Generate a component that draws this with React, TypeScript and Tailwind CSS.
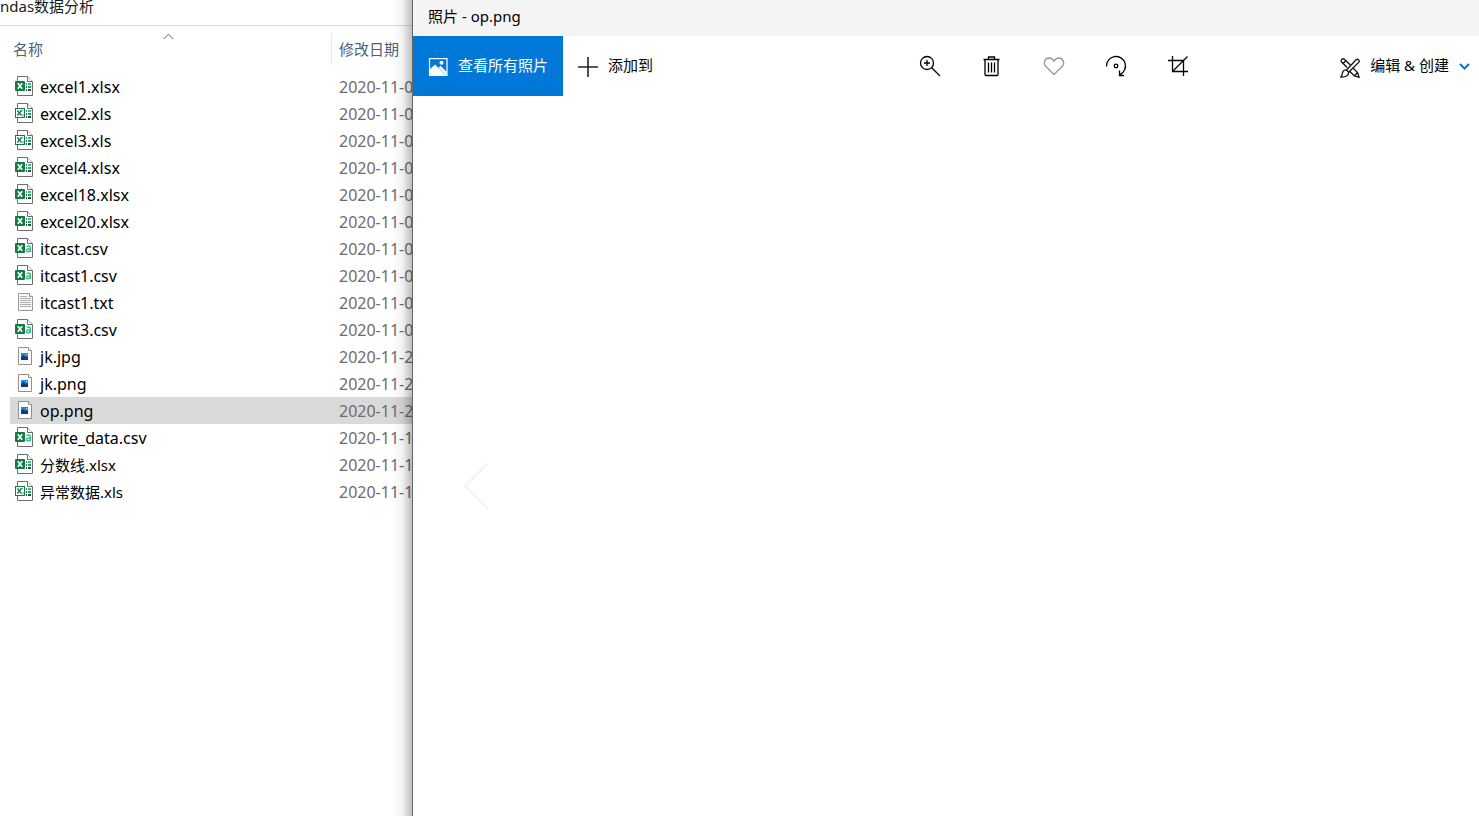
import React from 'react';

type Kind = 'xlsx' | 'xls' | 'csv' | 'txt' | 'image';

interface FileEntry {
  name: string;
  kind: Kind;
  date: string;
}

const files: FileEntry[] = [
  { name: 'excel1.xlsx', kind: 'xlsx', date: '2020-11-0' },
  { name: 'excel2.xls', kind: 'xls', date: '2020-11-0' },
  { name: 'excel3.xls', kind: 'xls', date: '2020-11-0' },
  { name: 'excel4.xlsx', kind: 'xlsx', date: '2020-11-0' },
  { name: 'excel18.xlsx', kind: 'xlsx', date: '2020-11-0' },
  { name: 'excel20.xlsx', kind: 'xlsx', date: '2020-11-0' },
  { name: 'itcast.csv', kind: 'csv', date: '2020-11-0' },
  { name: 'itcast1.csv', kind: 'csv', date: '2020-11-0' },
  { name: 'itcast1.txt', kind: 'txt', date: '2020-11-0' },
  { name: 'itcast3.csv', kind: 'csv', date: '2020-11-0' },
  { name: 'jk.jpg', kind: 'image', date: '2020-11-2' },
  { name: 'jk.png', kind: 'image', date: '2020-11-2' },
  { name: 'op.png', kind: 'image', date: '2020-11-2' },
  { name: 'write_data.csv', kind: 'csv', date: '2020-11-1' },
  { name: '分数线.xlsx', kind: 'xlsx', date: '2020-11-1' },
  { name: '异常数据.xls', kind: 'xls', date: '2020-11-1' },
];

const selected = 'op.png';

const isLatin = (name: string) => /^[\w.]+$/.test(name);

function SheetCells() {
  return (
    <g>
      <rect x="11" y="7" width="1" height="2" fill="#21a366" />
      <rect x="13" y="7" width="3" height="2" fill="#33c481" />
      <rect x="11" y="10" width="1" height="2" fill="#107c41" />
      <rect x="13" y="10" width="3" height="2" fill="#21a366" />
      <rect x="11" y="13" width="1" height="2" fill="#185c37" />
      <rect x="13" y="13" width="3" height="2" fill="#185c37" />
    </g>
  );
}

function FileIcon({ kind }: { kind: Kind }) {
  if (kind === 'txt') {
    return (
      <svg className="size-5 shrink-0" viewBox="0 0 20 20" aria-hidden="true">
        <path d="M3.500 1.500h11l3 3v14h-14z" fill="#f8f8f8" stroke="#999" />
        <path d="M14.500 1.500v3h3" fill="#fff" stroke="#999" />
        <path d="M5 4.500h7M5 6.500h11M5 8.500h11M5 10.500h11M5 12.500h11M5 14.500h11" stroke="#b0b0b0" />
      </svg>
    );
  }
  if (kind === 'image') {
    return (
      <svg className="size-5 shrink-0" viewBox="0 0 20 20" aria-hidden="true">
        <path d="M3.500 1.500h10l3 3v14h-13z" fill="#fcfcfc" stroke="#909090" />
        <path d="M13.500 1.500v3h3" fill="#fff" stroke="#909090" />
        <rect x="6" y="7" width="7" height="7" fill="#1e88e5" />
        <path d="M6 14v-3l2-2 2.500 2 1-1 1.500 1.500v2.500z" fill="#0c3c7c" />
        <rect x="11" y="8" width="1" height="1" fill="#bfe3ff" />
      </svg>
    );
  }
  return (
    <svg className="size-5 shrink-0" viewBox="0 0 20 20" aria-hidden="true">
      <path d="M2.500 .5h10l5 5v14h-15z" fill="#fff" stroke="#6e6e6e" />
      <path d="M12.500 .5v5h5" fill="#fff" stroke="#6e6e6e" />
      {kind === 'csv' ? (
        <g fill="none" stroke="#33c481" strokeWidth="1.500">
          <path d="M11.700 8.600c1.300-.9 3.600-.8 3.600 1v4.500" />
          <path d="M15.300 10.800c-2.200 0-3.800.3-3.800 1.700 0 1.900 3 1.700 3.800-.2" />
        </g>
      ) : (
        <SheetCells />
      )}
      {kind === 'xls' ? (
        <g fill="none">
          <rect x=".5" y="5.500" width="9" height="9" fill="#fff" stroke="#107c41" />
          <path d="M2.300 7.500l4.200 5M6.500 7.500l-4.200 5" stroke="#107c41" strokeWidth="1.300" />
          <path d="M5 7.500h3M8 11v2.500" stroke="#4aa673" />
        </g>
      ) : (
        <g>
          <rect x="0" y="5" width="10" height="10" rx="1" fill="#107c41" />
          <path d="M2.800 7.200l4.400 5.600M7.200 7.200l-4.400 5.600" stroke="#fff" strokeWidth="1.700" />
        </g>
      )}
    </svg>
  );
}

function Explorer() {
  return (
    <section className="relative w-[412px] shrink-0 overflow-hidden" aria-label="ndas数据分析">
      <header className="flex h-[26px] items-start border-b border-[#d9d9d9]">
        <h1 className="-mt-1 text-[15px] leading-5 text-[#1a1a1a]">ndas数据分析</h1>
      </header>
      <table className="ml-[10px] w-[480px] table-fixed border-separate border-spacing-0 text-left">
        <thead>
          <tr className="h-[47px] text-[15px] leading-5 text-[#4c607a]">
            <th className="relative w-[322px] p-0 pb-[2px] pl-[3px] font-normal">
              名称
              <svg className="absolute top-[7px] left-[153px] h-[7px] w-[11px]" viewBox="0 0 11 7" fill="none" stroke="#666" aria-hidden="true">
                <path d="M.7 6l4.800-4.800L10.300 6" />
              </svg>
              <span className="absolute top-[7px] right-0 h-8 w-px bg-[#e5e5e5]" />
            </th>
            <th className="p-0 pb-[2px] pl-[7px] font-normal">修改日期</th>
          </tr>
        </thead>
        <tbody>
          {files.map((file) => (
            <tr
              key={file.name}
              aria-selected={file.name === selected}
              className={file.name === selected ? 'h-[27px] bg-[#d9d9d9]' : 'h-[27px]'}
            >
              <td className="p-0 pl-[5px]">
                <div className="flex h-[27px] items-center gap-[5px] text-black">
                  <span className="pb-[2px]">
                    <FileIcon kind={file.kind} />
                  </span>
                  <span className={isLatin(file.name) ? 'text-[16px] leading-5' : 'text-[15px] leading-5'}>{file.name}</span>
                </div>
              </td>
              <td className="p-0 pl-[7px]">
                <div className="flex h-[27px] items-center text-[16px] leading-5 whitespace-nowrap text-[#6d6d6d]">{file.date}</div>
              </td>
            </tr>
          ))}
        </tbody>
      </table>
      <div className="pointer-events-none absolute inset-y-0 right-0 w-5 bg-linear-to-r from-black/0 via-black/5 to-black/25" />
    </section>
  );
}

function Icon({ children, faded }: { children: React.ReactNode; faded?: boolean }) {
  return (
    <svg
      className={faded ? 'size-6 text-[#999]' : 'size-6 text-black'}
      viewBox="0 0 24 24"
      fill="none"
      stroke="currentColor"
      strokeWidth="1.300"
      aria-hidden="true"
    >
      {children}
    </svg>
  );
}

const tools = [
  {
    label: '缩放',
    icon: (
      <Icon>
        <circle cx="9" cy="9" r="6.500" />
        <path d="M13.700 13.700l8.300 8.300M9 6v6M6 9h6" />
      </Icon>
    ),
  },
  {
    label: '删除',
    icon: (
      <Icon>
        <path d="M3.500 5.500h16M8.500 5.500v-2.500h6v2.500M5 5.500v15q0 1 1 1h11q1 0 1-1v-15" />
        <path d="M8.500 8.500v10M11.500 8.500v10M14.500 8.500v10" />
      </Icon>
    ),
  },
  {
    label: '收藏',
    icon: (
      <Icon faded>
        <path d="M12 20.500L3.800 12.300C.8 9.300 2.800 4 7 4c2.200 0 3.900 1.200 5 3.200C13.100 5.200 14.800 4 17 4c4.200 0 6.200 5.300 3.200 8.300z" />
      </Icon>
    ),
  },
  {
    label: '旋转',
    icon: (
      <Icon>
        <path d="M2.500 12.500A9.500 9.500 0 1 1 16 20.600M15.500 16.500v5h4.500" />
        <circle cx="12" cy="12" r="1.800" />
      </Icon>
    ),
  },
  {
    label: '裁剪',
    icon: (
      <Icon>
        <path d="M6.500 2v15.500H22M2 6.500h15.500V22M6.500 17.500L21.500 2.500" />
      </Icon>
    ),
  },
];

function Photos() {
  return (
    <main className="flex min-w-0 flex-1 flex-col border-l border-[#666] bg-white">
      <header className="flex h-9 shrink-0 items-center bg-[#f4f4f4] px-[15px] pb-1">
        <h2 className="text-[15px] leading-5 text-black">照片 - op.png</h2>
      </header>
      <div className="flex h-[60px] shrink-0 items-stretch text-[15px] leading-5 whitespace-nowrap text-black">
        <button type="button" className="flex w-[150px] items-center gap-[10px] bg-[#0078d7] pl-[15px] text-white">
          <svg className="mt-[2px] h-[18px] w-5" viewBox="0 0 20 18" aria-hidden="true">
            <rect x="1.500" y=".6" width="17.500" height="16.800" fill="none" stroke="#fff" strokeWidth="1.200" />
            <path d="M1 12l6-5.500L18 17.500H1z" fill="#fff" />
            <path d="M10.500 9.500l2-1.800 6 6v4z" fill="#fff" />
            <circle cx="13.500" cy="4.700" r="2" fill="#fff" />
          </svg>
          <span className="pb-[2px]">查看所有照片</span>
        </button>
        <button type="button" className="flex items-center gap-[10px] px-[15px]">
          <svg className="mt-[2px] size-5" viewBox="0 0 20 20" fill="none" stroke="#222" strokeWidth="1.600" aria-hidden="true">
            <path d="M10 0v20M0 10h20" />
          </svg>
          <span className="pb-[2px]">添加到</span>
        </button>
        <div className="mr-[115px] ml-auto flex">
          {tools.map((tool) => (
            <button key={tool.label} type="button" aria-label={tool.label} className="flex w-[62px] items-center justify-center">
              {tool.icon}
            </button>
          ))}
        </div>
        <button type="button" className="flex items-center gap-[10px] pr-[9px] pl-4">
          <svg className="mt-[3px] size-5" viewBox="0 0 20 20" fill="none" stroke="#111" strokeWidth="1.300" aria-hidden="true">
            <path d="M6.500 12L16.300 1.600a1.900 1.900 0 0 1 2.600 2.600L8.600 14.300" />
            <path d="M6.500 12l2.100 2.300c.4 2.500-2 5-8 4.700 1.800-1 1.400-2.200 2-4.500.6-2 2.600-3 3.900-2.500z" />
            <path d="M7.200 9.500L1.600 4a2 2 0 0 1 2.800-2.800l6 5.800M3.200 5.500l2.600-2.700M12.800 9.800l4.900 5 1.400 4.500-4.700-1.300-4.500-4.500M14.300 17.800l3.200-3" />
          </svg>
          <span className="pb-[2px]">编辑 &amp; 创建</span>
          <svg className="h-[7px] w-[11px]" viewBox="0 0 11 7" fill="none" stroke="#0078d7" strokeWidth="2" aria-hidden="true">
            <path d="M1 1l4.500 4.500L10 1" />
          </svg>
        </button>
      </div>
      <div className="flex flex-1 items-start px-[50px] pt-[365px]">
        <button type="button" aria-label="上一张">
          <svg className="h-[50px] w-[26px]" viewBox="0 0 26 50" fill="none" stroke="#f4f4f4" strokeWidth="2" aria-hidden="true">
            <path d="M25 2L2 25l23 23" />
          </svg>
        </button>
      </div>
    </main>
  );
}

export default function App() {
  return (
    <div className="flex min-h-screen overflow-hidden bg-white font-['Noto_Sans','Noto_Sans_CJK_SC',sans-serif]">
      <Explorer />
      <Photos />
    </div>
  );
}
